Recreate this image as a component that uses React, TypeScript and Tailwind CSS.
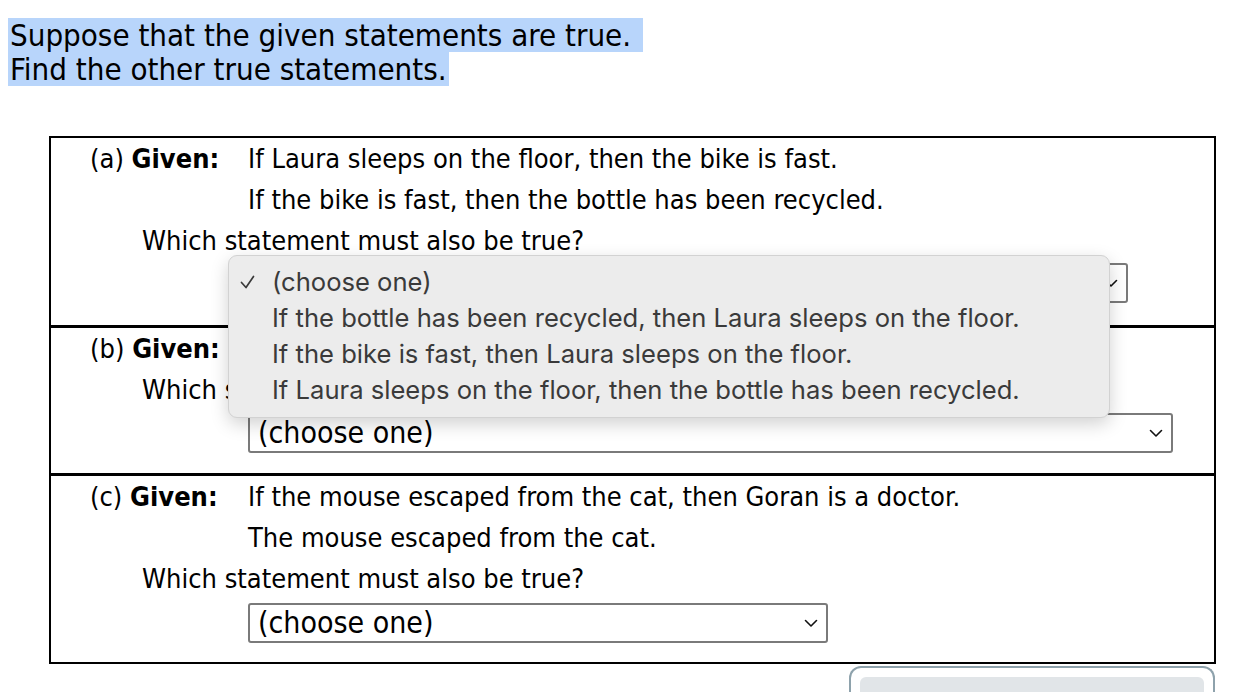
import React from "react"

const body = { fontFamily: '"DejaVu Sans Condensed", "DejaVu Sans", sans-serif' }
const mac = { fontFamily: 'Inter, "Noto Sans", sans-serif' }

function Chevron() {
  return (
    <svg width="14" height="9" viewBox="0 0 14 9" className="shrink-0">
      <path d="M1.5 1.5 L7 7 L12.5 1.5" fill="none" stroke="#111" strokeWidth="1.6" strokeLinecap="round" strokeLinejoin="round" />
    </svg>
  )
}

function Check() {
  return (
    <svg width="15" height="14" viewBox="0 0 15 14">
      <path d="M1.5 7.5 L6 12.5 L13.5 1.5" fill="none" stroke="#3a3a3a" strokeWidth="1.7" strokeLinecap="round" strokeLinejoin="round" />
    </svg>
  )
}

function Select({ width }: { width: string }) {
  return (
    <div className={`ml-[197px] flex h-[40px] items-center justify-between rounded-[3px] border-2 border-[#7a7a7a] pl-[8px] pr-[8px] ${width}`}>
      <span className="text-[30px] leading-none text-black">(choose one)</span>
      <Chevron />
    </div>
  )
}

function Row({ label, text }: { label?: string; text: string }) {
  return (
    <div className="flex h-[41px] items-center pt-[2px]">
      <div className="w-[197px] shrink-0 pl-[39px]">
        {label && (
          <span>
            ({label}) <b>Given:</b>
          </span>
        )}
      </div>
      <span className="whitespace-nowrap">{text}</span>
    </div>
  )
}

function Which({ text }: { text: string }) {
  return <div className="flex h-[41px] items-center whitespace-nowrap pl-[91px] pt-[2px]">{text}</div>
}

const options = [
  "If the bottle has been recycled, then Laura sleeps on the floor.",
  "If the bike is fast, then Laura sleeps on the floor.",
  "If Laura sleeps on the floor, then the bottle has been recycled.",
]

export default function App() {
  return (
    <div className="relative h-[692px] w-[1238px] overflow-hidden bg-white text-black" style={body}>
      {/* Instructions, shown selected */}
      <div className="pl-[8px] pt-[18px] text-[31px] leading-[34px]">
        <div className="w-fit whitespace-nowrap bg-[#b8d5fb] pl-[2px] pr-[12px]">Suppose that the given statements are true.</div>
        <div className="w-fit whitespace-nowrap bg-[#b8d5fb] pl-[2px] pr-[2px]">Find the other true statements.</div>
      </div>

      {/* Question table */}
      <div className="ml-[49px] mt-[50px] w-[1167px] border-2 border-black text-[27px]">
        <div className="pb-[22px]">
          <Row label="a" text="If Laura sleeps on the floor, then the bike is fast." />
          <Row text="If the bike is fast, then the bottle has been recycled." />
          <Which text="Which statement must also be true?" />
          <div className="mt-[2px]">
            <Select width="w-[880px]" />
          </div>
        </div>
        <div className="border-t-[3px] border-black pb-[20px]">
          <Row label="b" text="If Laura sleeps on the floor, then the bottle has been recycled." />
          <Which text="Which statement must also be true?" />
          <div className="mt-[3px]">
            <Select width="w-[925px]" />
          </div>
        </div>
        <div className="border-t-[3px] border-black pb-[19px]">
          <Row label="c" text="If the mouse escaped from the cat, then Goran is a doctor." />
          <Row text="The mouse escaped from the cat." />
          <Which text="Which statement must also be true?" />
          <div className="mt-[4px]">
            <Select width="w-[580px]" />
          </div>
        </div>
      </div>

      {/* Bottom card peeking in */}
      <div className="ml-[849px] mt-[2px] h-[40px] w-[366px] rounded-t-[12px] border-2 border-b-0 border-[#8ea2ac] px-[9px] pt-[9px]">
        <div className="h-full rounded-t-[6px] bg-[#e1e5e8]" />
      </div>

      {/* Open dropdown menu for (a) */}
      <div
        className="absolute left-[228px] top-[255px] w-[882px] rounded-[9px] border border-[#d2d2d2] bg-[#ececec] pb-[9px] pt-[8px] text-[25.6px] text-[#3a3a3a] shadow-[0_6px_18px_rgba(0,0,0,0.18)]"
        style={mac}
      >
        <div className="flex h-[36px] items-center">
          <span className="flex w-[43px] items-center pl-[11px]">
            <Check />
          </span>
          <span>(choose one)</span>
        </div>
        {options.map((o) => (
          <div key={o} className="flex h-[36px] items-center">
            <span className="w-[43px]" />
            <span className="whitespace-nowrap">{o}</span>
          </div>
        ))}
      </div>
    </div>
  )
}
